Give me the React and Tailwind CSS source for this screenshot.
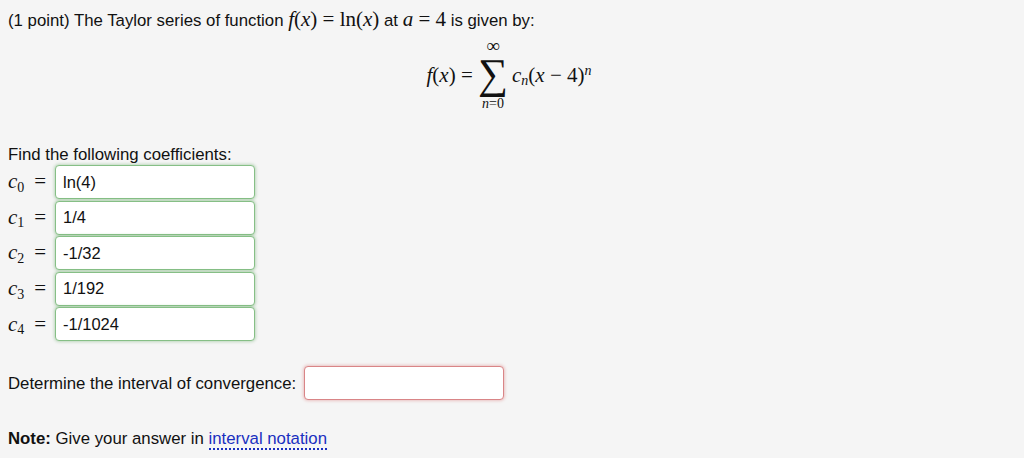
import React from "react";

const serif = { fontFamily: '"Liberation Serif", "DejaVu Serif", serif' };

const coefficients = [
  { n: 0, value: "ln(4)" },
  { n: 1, value: "1/4" },
  { n: 2, value: "-1/32" },
  { n: 3, value: "1/192" },
  { n: 4, value: "-1/1024" },
];

const Answer = ({ value, tone }) => (
  <div
    className={
      "h-[34px] w-[200px] rounded-[4px] bg-white px-[7px] flex items-center text-[16.5px] text-[#111] border " +
      (tone === "green"
        ? "border-[#86bf86] shadow-[0_0_3px_1px_rgba(120,180,120,0.45)]"
        : "border-[#d98587] shadow-[0_0_3px_1px_rgba(220,120,120,0.4)]")
    }
  >
    {value}
  </div>
);

export default function App() {
  return (
    <div
      className="w-[1024px] h-[458px] bg-[#f5f5f5] text-[#111] overflow-hidden"
      style={{ fontFamily: '"Liberation Sans", Arial, sans-serif' }}
    >
      <div className="pl-[8px] pt-[7px] text-[16.8px] leading-[24px] flex items-baseline">
        <span>(1 point) The Taylor series of function&nbsp;</span>
        <span className="text-[21px]" style={serif}>
          <i>f</i>(<i>x</i>) = ln(<i>x</i>)
        </span>
        <span>&nbsp;at&nbsp;</span>
        <span className="text-[21px]" style={serif}>
          <i>a</i> = 4
        </span>
        <span>&nbsp;is given by:</span>
      </div>

      <div className="flex justify-center mt-[6px] pr-[6px]" style={serif}>
        <div className="flex items-center text-[21px]">
          <span>
            <i>f</i>(<i>x</i>) =&nbsp;
          </span>
          <span className="flex flex-col items-center leading-none">
            <span className="text-[19px] leading-[14px]">∞</span>
            <span className="text-[42px] leading-[42px]">∑</span>
            <span className="text-[14px] leading-[16px] mt-[1px]">
              <i>n</i>=0
            </span>
          </span>
          <span className="ml-[4px]">
            <i>c</i>
            <sub className="text-[14px]">
              <i>n</i>
            </sub>
            (<i>x</i> − 4)
            <sup className="text-[14px]">
              <i>n</i>
            </sup>
          </span>
        </div>
      </div>

      <div className="pl-[8px] mt-[33px] text-[16.8px] leading-[20px]">
        Find the following coefficients:
      </div>

      <div className="flex flex-col gap-[1.6px] mt-0 pl-[8px]">
        {coefficients.map((c) => (
          <div key={c.n} className="flex items-center">
            <span className="w-[47px] text-[21px]" style={serif}>
              <i>c</i>
              <sub className="text-[14px]">{c.n}</sub>
              <span className="ml-[10px]">=</span>
            </span>
            <Answer value={c.value} tone="green" />
          </div>
        ))}
      </div>

      <div className="flex items-center pl-[8px] mt-[25px] text-[16.8px]">
        <span className="mr-[8px]">Determine the interval of convergence:</span>
        <Answer value="" tone="red" />
      </div>

      <div className="pl-[8px] mt-[26px] text-[16.8px]">
        <b>Note:</b> Give your answer in{" "}
        <a className="text-[#1a2fc0] border-b-2 border-dotted border-[#1a2fc0]">
          interval notation
        </a>
      </div>
    </div>
  );
}
